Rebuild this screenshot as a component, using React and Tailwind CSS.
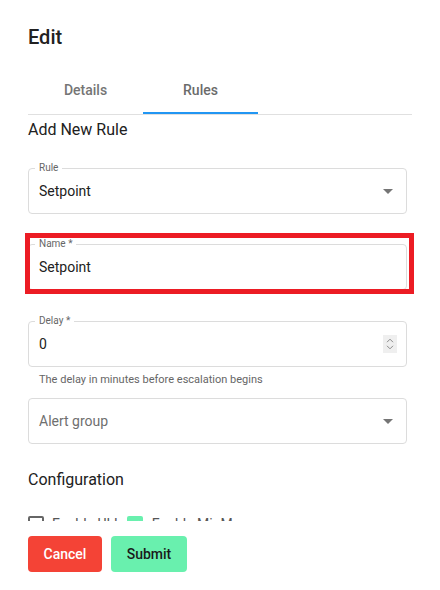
import React from "react";

function Arrow() {
  return (
    <svg className="absolute right-[6px] top-1/2 -translate-y-1/2" width="24" height="24" viewBox="0 0 24 24">
      <path d="M7 10l5 5 5-5z" fill="#757575" />
    </svg>
  );
}

function Field({ label, value, placeholder, select, spinner, children }) {
  return (
    <div className="relative h-[46px] w-[379px] rounded-[4px] border border-[#dcdcdc] flex items-center pl-[10px]">
      {label && (
        <span className="absolute left-[6px] top-[-8px] bg-white px-[4px] text-[10px] leading-[14px] text-[#666]">
          {label}
        </span>
      )}
      {value !== undefined ? (
        <span className="text-[14px] text-[#212121]">{value}</span>
      ) : (
        <span className="text-[14px] text-[#6f6f6f]">{placeholder}</span>
      )}
      {select && <Arrow />}
      {spinner && (
        <div className="absolute right-[9px] top-1/2 -translate-y-1/2 w-[14px] h-[18px] bg-[#efefef] flex flex-col items-center justify-center gap-[2px]">
          <svg width="8" height="5" viewBox="0 0 8 5"><path d="M1 4.2L4 1.2l3 3" fill="none" stroke="#8a8a8a" strokeWidth="1" /></svg>
          <svg width="8" height="5" viewBox="0 0 8 5"><path d="M1 0.8L4 3.8l3-3" fill="none" stroke="#8a8a8a" strokeWidth="1" /></svg>
        </div>
      )}
      {children}
    </div>
  );
}

export default function App() {
  return (
    <div className="w-[440px] h-[590px] bg-white flex flex-col" style={{ fontFamily: "Roboto, 'Liberation Sans', sans-serif" }}>
      <div className="pt-[23px] px-7 text-xl leading-7 font-medium text-[#212121]">Edit</div>
      <div className="mx-7 mt-[15px] h-[49px] border-b border-[#e0e0e0] flex">
        <div className="relative w-[115px] h-12 flex items-center justify-center text-[14px] font-medium text-[#757575]">Details</div>
        <div className="relative w-[115px] h-12 flex items-center justify-center text-[14px] font-medium text-[#6b6b6b]">
          Rules
          <div className="absolute left-0 right-0 bottom-0 h-[2px] bg-[#2196f3]" />
        </div>
      </div>
      <div className="h-[406px] overflow-hidden px-7 flex flex-col">
        <div className="mt-[3px] text-base leading-6 text-[#212121]">Add New Rule</div>
        <div className="mt-[26px]">
          <Field label="Rule" value="Setpoint" select />
        </div>
        <div className="mt-[30px] relative">
          <Field label="Name *" value="Setpoint" />
          <div className="absolute pointer-events-none left-[-3px] top-[-11px] w-[389px] h-[61px] border-[5px] border-[#ec1c24]" />
        </div>
        <div className="mt-[31px]">
          <Field label="Delay *" value="0" spinner />
        </div>
        <div className="mt-[6px] pl-[11px] text-[11px] leading-[14px] text-[#666]">The delay in minutes before escalation begins</div>
        <div className="mt-[11px]">
          <Field placeholder="Alert group" select />
        </div>
        <div className="mt-[24px] text-base leading-6 text-[#212121]">Configuration</div>
        <div className="mt-[22px] flex items-center text-[14px] leading-5 text-[#555]">
          <div className="w-4 h-4 rounded-[2px] border-2 border-[#666] shrink-0" />
          <span className="ml-[8px]">Enable ULL</span>
          <div className="ml-[5px] w-4 h-4 rounded-[2px] bg-[#69f0ae] flex items-center justify-center shrink-0">
            <svg width="12" height="12" viewBox="0 0 24 24"><path d="M9 16.2L4.8 12l-1.4 1.4L9 19 21 7l-1.4-1.4z" fill="#fff" /></svg>
          </div>
          <span className="ml-[9px]">Enable MinMax</span>
        </div>
      </div>
      <div className="px-7 pt-[15px] flex gap-[9px]">
        <button className="w-[74px] h-9 rounded-[4px] bg-[#f44336] text-white text-[14px] font-medium">Cancel</button>
        <button className="w-[76px] h-9 rounded-[4px] bg-[#69f0ae] text-[#1a1a1a] text-[14px] font-medium">Submit</button>
      </div>
    </div>
  );
}
